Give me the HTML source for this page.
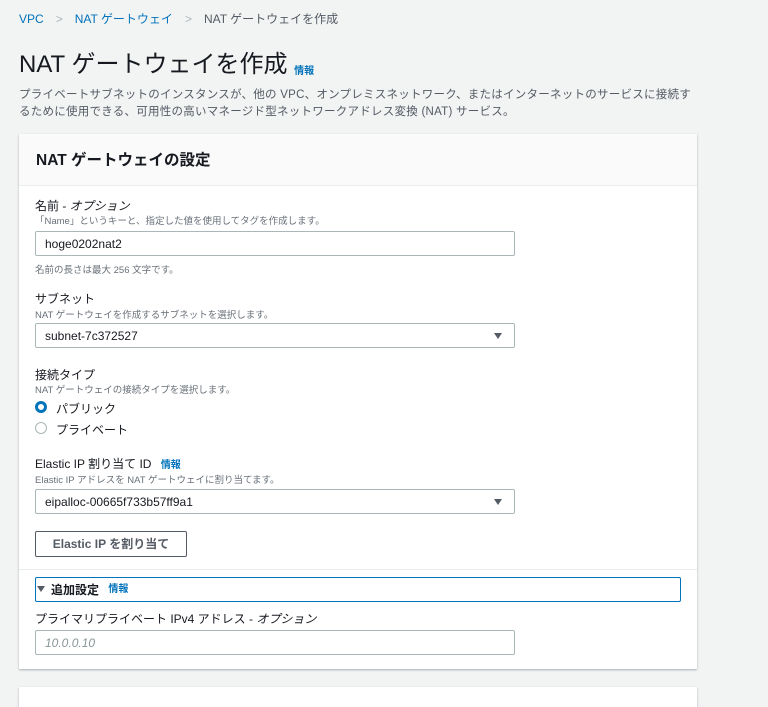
<!DOCTYPE html>
<html><head><meta charset="utf-8"><style>
body{margin:0;background:#f2f3f3;font-family:"Liberation Sans","Noto Sans CJK JP",sans-serif;color:#16191f;width:768px;height:699px;overflow:hidden;position:relative}
.a{position:absolute;white-space:nowrap}
.blue{color:#0073bb}
.card{position:absolute;left:19px;top:134px;width:678px;height:535px;background:#fff;box-shadow:0 1px 2px rgba(0,28,36,.3)}
.hdr{position:absolute;left:0;top:0;right:0;height:51px;background:#fafafa;border-bottom:1px solid #eaeded}
.lab{font-size:12px;color:#16191f}
.hint{font-size:9.5px;color:#687078}
.inp{position:absolute;left:16px;width:480px;height:25px;border:1px solid #aab7b8;border-radius:2px;font-size:12px;line-height:24px;padding-left:9px;box-sizing:border-box}
.tri{position:absolute;right:12px;top:9px;width:0;height:0;border-left:4px solid transparent;border-right:4px solid transparent;border-top:6px solid #545b64}
</style></head><body>
<div class="a" style="left:19px;top:10px;font-size:12px"><span class="blue">VPC</span><span style="color:#aab7b8;margin:0 12px">&gt;</span><span class="blue">NAT ゲートウェイ</span><span style="color:#aab7b8;margin:0 12px">&gt;</span><span style="color:#545b64">NAT ゲートウェイを作成</span></div>
<div class="a" style="left:19px;top:44px;font-size:24px">NAT ゲートウェイを作成 <span class="blue" style="font-size:10px;font-weight:bold;vertical-align:-2px">情報</span></div>
<div class="a" style="left:19px;top:87px;font-size:11.5px;letter-spacing:0.25px;color:#545b64;line-height:17px">プライベートサブネットのインスタンスが、他の VPC、オンプレミスネットワーク、またはインターネットのサービスに接続す<br>るために使用できる、可用性の高いマネージド型ネットワークアドレス変換 (NAT) サービス。</div>
<div class="card">
<div class="hdr"><div class="a" style="left:17px;top:14px;font-size:15.5px;font-weight:bold">NAT ゲートウェイの設定</div></div>
<div class="a lab" style="left:16px;top:63px">名前 - <i>オプション</i></div>
<div class="a hint" style="left:16px;top:79px">「Name」というキーと、指定した値を使用してタグを作成します。</div>
<div class="inp" style="top:97px">hoge0202nat2</div>
<div class="a hint" style="left:16px;top:128px">名前の長さは最大 256 文字です。</div>
<div class="a lab" style="left:16px;top:156px">サブネット</div>
<div class="a hint" style="left:16px;top:173px">NAT ゲートウェイを作成するサブネットを選択します。</div>
<div class="inp" style="top:189px">subnet-7c372527<div class="tri"></div></div>
<div class="a lab" style="left:16px;top:232px">接続タイプ</div>
<div class="a hint" style="left:16px;top:248px">NAT ゲートウェイの接続タイプを選択します。</div>
<div class="a" style="left:16px;top:267px;width:6px;height:6px;border:3px solid #0073bb;border-radius:50%"></div>
<div class="a lab" style="left:37px;top:266px">パブリック</div>
<div class="a" style="left:16px;top:288px;width:10px;height:10px;border:1px solid #aab7b8;border-radius:50%"></div>
<div class="a lab" style="left:37px;top:287px">プライベート</div>
<div class="a lab" style="left:16px;top:321px">Elastic IP 割り当て ID <span class="blue" style="font-size:10px;font-weight:bold;margin-left:6px">情報</span></div>
<div class="a hint" style="left:16px;top:338px">Elastic IP アドレスを NAT ゲートウェイに割り当てます。</div>
<div class="inp" style="top:355px">eipalloc-00665f733b57ff9a1<div class="tri"></div></div>
<div class="a" style="left:16px;top:397px;width:152px;height:26px;border:1px solid #545b64;border-radius:2px;box-sizing:border-box;font-size:12px;font-weight:bold;color:#545b64;text-align:center;line-height:24px">Elastic IP を割り当て</div>
<div class="a" style="left:0;right:0;top:435px;height:1px;background:#eaeded"></div>
<div class="a" style="left:16px;top:443px;width:646px;height:25px;border:1px solid #0073bb;box-sizing:border-box;border-radius:2px"></div>
<div class="a" style="left:18px;top:452px;width:0;height:0;border-left:4px solid transparent;border-right:4px solid transparent;border-top:6px solid #545b64"></div>
<div class="a" style="left:32px;top:446px;font-size:12px;font-weight:bold">追加設定 <span class="blue" style="font-size:10px;margin-left:6px;vertical-align:2px">情報</span></div>
<div class="a lab" style="left:16px;top:476px">プライマリプライベート IPv4 アドレス - <i>オプション</i></div>
<div class="inp" style="top:496px;color:#879596;font-style:italic">10.0.0.10</div>
</div>
<div class="a" style="left:19px;top:687px;width:678px;height:20px;background:#fff;box-shadow:0 1px 2px rgba(0,28,36,.3)"></div>
</body></html>
